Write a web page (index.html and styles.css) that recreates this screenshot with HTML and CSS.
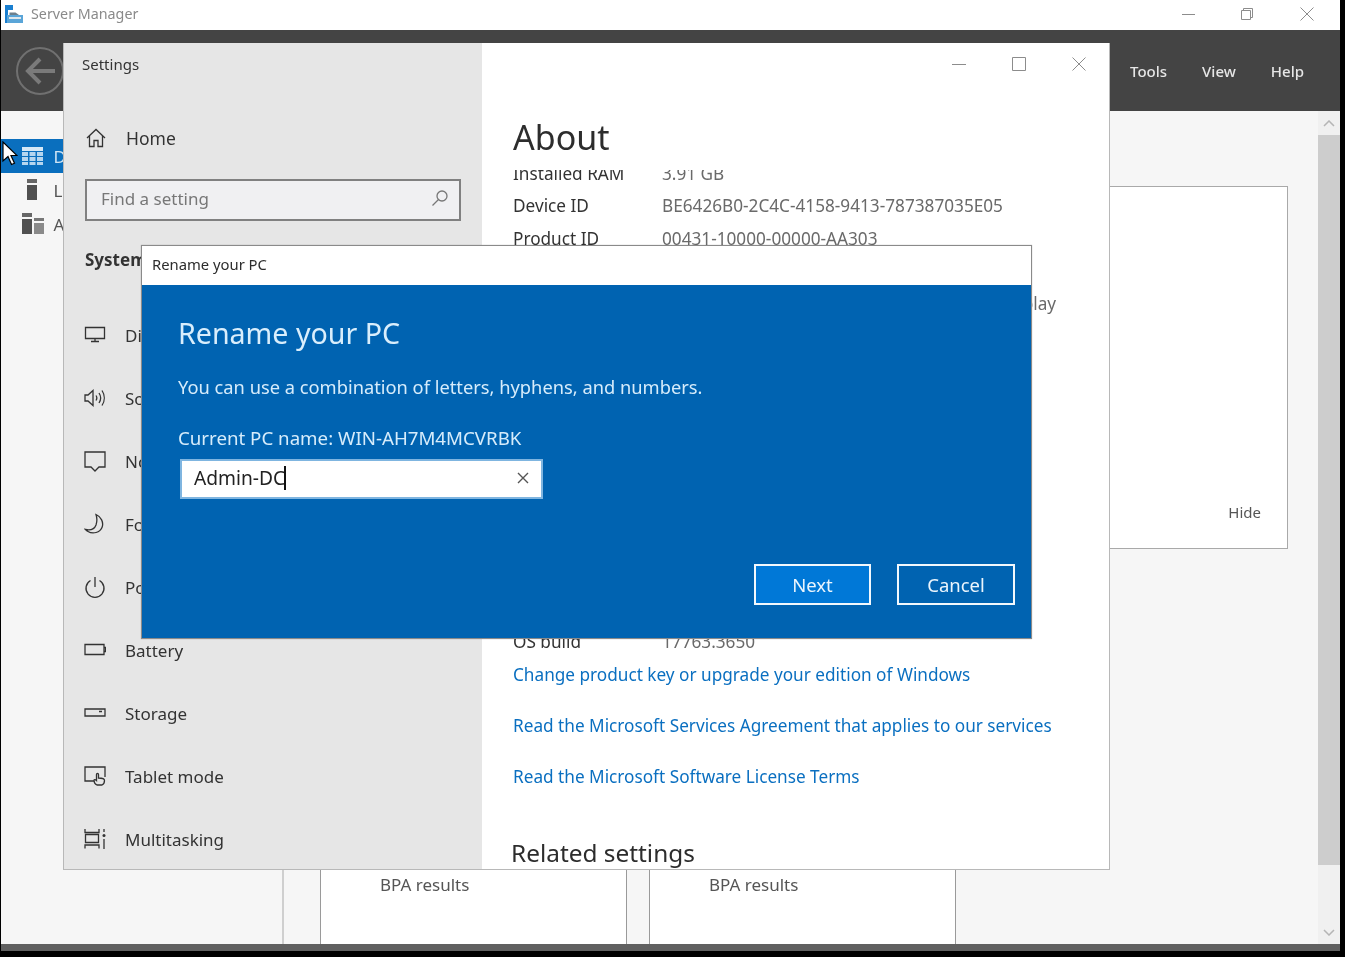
FILE: index.html
```html
<!DOCTYPE html>
<html lang="en">
<head>
<meta charset="utf-8">
<title>Server Manager</title>
<link rel="stylesheet" href="styles.css">
</head>
<body>
<div class="stage">
  <div class="sm">
    <header class="sm-title">
      <svg class="sm-logo" width="20" height="20" viewBox="0 0 20 20"><rect x="1" y="1" width="8" height="5" fill="#1a7fd0"/><rect x="1" y="6" width="3" height="13" fill="#1a7fd0"/><path d="M5.500 11V8.500h6L15 11z" fill="#6d7f8c"/><rect x="3" y="11" width="16" height="8" fill="#5aa5d8"/><rect x="5" y="13" width="12" height="2" fill="#dfe7ec"/></svg>
      <span class="sm-name">Server Manager</span>
      <div class="sm-controls">
        <svg width="14" height="14" viewBox="0 0 14 14"><path d="M0 7.500h13" class="ctl"/></svg>
        <svg width="14" height="14" viewBox="0 0 14 14"><path d="M.5 3.500h9v9h-9zM2.500 3.500v-2h9v9h-2" class="ctl"/></svg>
        <svg width="14" height="14" viewBox="0 0 14 14"><path d="M.5.500l13 13M13.500.500l-13 13" class="ctl"/></svg>
      </div>
    </header>
    <div class="sm-bar">
      <div class="back"><svg width="34" height="30" viewBox="0 0 34 30"><path d="M17 3L5 15l12 12M6 15h26" class="back-arrow"/></svg></div>
      <nav class="sm-menu"><span>Tools</span><span>View</span><span>Help</span></nav>
    </div>
    <div class="sm-body">
      <aside class="sm-side">
        <div class="sm-side-item selected">
          <svg width="23" height="20" viewBox="0 0 23 20"><path d="M1 1h21v4H1z" fill="#d5e8f6"/><path d="M1 6h6v4H1zM8.500 6h6v4h-6zM16 6h6v4h-6zM1 11h6v4H1zM8.500 11h6v4h-6zM16 11h6v4h-6zM1 16h6v3H1zM8.500 16h6v3h-6zM16 16h6v3h-6z" fill="#b5d6ef"/></svg>
          <span>Dashboard</span>
        </div>
        <div class="sm-side-item">
          <svg width="23" height="22" viewBox="0 0 23 22"><rect x="6" y="0" width="10" height="4" fill="#666"/><rect x="6" y="6" width="10" height="15" fill="#505050"/></svg>
          <span>Local Server</span>
        </div>
        <div class="sm-side-item">
          <svg width="23" height="22" viewBox="0 0 23 22"><rect x="1" y="0" width="10" height="4" fill="#666"/><rect x="1" y="6" width="10" height="15" fill="#505050"/><rect x="13" y="5" width="10" height="3" fill="#777"/><rect x="13" y="10" width="10" height="11" fill="#8a8a8a"/></svg>
          <span>All Servers</span>
        </div>
      </aside>
      <main class="sm-main">
        <section class="welcome"><span class="hide">Hide</span></section>
        <div class="cards">
          <div class="card"><span>BPA results</span></div>
          <div class="card"><span>BPA results</span></div>
        </div>
      </main>
      <div class="sm-scroll">
        <div class="scroll-btn"><svg width="12" height="7" viewBox="0 0 12 7"><path d="M1 6l5-5 5 5" class="chev"/></svg></div>
        <div class="scroll-thumb"></div>
        <div class="scroll-track"></div>
        <div class="scroll-btn"><svg width="12" height="7" viewBox="0 0 12 7"><path d="M1 1l5 5 5-5" class="chev"/></svg></div>
      </div>
    </div>
    <div class="sm-foot"></div>
  </div>

  <svg class="cursor" width="16" height="26" viewBox="0 0 16 26"><path d="M1 1v19l5-4.500 3.500 8 3-1.300-3.500-7.700h6z" fill="#fff" stroke="#000" stroke-width="1.200"/></svg>

  <div class="settings">
    <aside class="set-side">
      <div class="set-title">Settings</div>
      <div class="set-home">
        <svg class="ico" width="22" height="22" viewBox="0 0 22 22"><path d="M2 11L11 2.500 20 11M4.500 9v10.500h4.500v-6h4v6h4.500V9" class="line"/></svg>
        <span>Home</span>
      </div>
      <div class="set-search">
        <span>Find a setting</span>
        <svg width="18" height="18" viewBox="0 0 18 18"><circle cx="11" cy="7" r="5" class="line-soft"/><path d="M7.500 10.500L1.500 16.500" class="line-soft"/></svg>
      </div>
      <div class="set-group">System</div>
      <ul class="set-list">
        <li><svg class="ico" width="22" height="22" viewBox="0 0 22 22"><path d="M1.500 3.500h19v11h-19zM11 14.500v3M7 17.500h8" class="line"/></svg><span>Display</span></li>
        <li><svg class="ico" width="22" height="22" viewBox="0 0 22 22"><path d="M1 8h3l5-4.500v15L4 14H1zM12 8.500c1 1.500 1 3.500 0 5M15 6c2 3 2 7 0 10M18 3.500c3 4.500 3 10.500 0 15" class="line"/></svg><span>Sound</span></li>
        <li><svg class="ico" width="22" height="22" viewBox="0 0 22 22"><path d="M1 2h20v15h-6l-4 4-4-4H1z" class="line"/></svg><span>Notifications &amp; actions</span></li>
        <li><svg class="ico" width="22" height="22" viewBox="0 0 22 22"><path d="M12 1.500c5 2 8 8 6 13-2 5-9 7-14 4-1-.6-1.800-1.300-2.500-2 5 1 9-.5 10.500-4.500 1.200-3.500 1-7.500 0-10.500z" class="line"/></svg><span>Focus assist</span></li>
        <li><svg class="ico" width="22" height="22" viewBox="0 0 22 22"><path d="M6.500 4.500a9 9 0 1 0 9 0M11 1v10" class="line"/></svg><span>Power &amp; sleep</span></li>
        <li><svg class="ico" width="22" height="22" viewBox="0 0 22 22"><path d="M1 5.500h19v10H1zM20 8.500h1.500v4H20" class="line"/></svg><span>Battery</span></li>
        <li><svg class="ico" width="22" height="22" viewBox="0 0 22 22"><path d="M1 7h20v7H1zM15 9.500h3" class="line"/></svg><span>Storage</span></li>
        <li><svg class="ico" width="22" height="22" viewBox="0 0 22 22"><path d="M10 16H1V2h20v10M13 20c-2-1-3-3-3-4.500 0-1.500 1.500-1 2.500 0V9.500c0-1.500 2-1.500 2 0V13c2 0 6 0 6 2.500 0 2-1 3.800-2.500 4.500z" class="line"/></svg><span>Tablet mode</span></li>
        <li><svg class="ico" width="22" height="22" viewBox="0 0 22 22"><path d="M1 1v3.500h14V1M1.500 6.500h13v8h-13zM1 20.500V17h14v3.500M20 1v3M20 11v10" class="line"/><circle cx="20" cy="7.500" r="1.500" fill="#333"/></svg><span>Multitasking</span></li>
      </ul>
    </aside>
    <section class="set-main">
      <div class="set-ctl">
        <svg width="14" height="14" viewBox="0 0 14 14"><path d="M0 7.500h14" class="ctl"/></svg>
        <svg width="14" height="14" viewBox="0 0 14 14"><path d="M.5.500h13v13H.5z" class="ctl"/></svg>
        <svg width="14" height="14" viewBox="0 0 14 14"><path d="M.5.500l13 13M13.500.500l-13 13" class="ctl"/></svg>
      </div>
      <h1 class="about">About</h1>
      <div class="pane">
        <div class="pane-inner">
          <div class="row"><b>Installed RAM</b><i>3.91 GB</i></div>
          <div class="row"><b>Device ID</b><i>BE6426B0-2C4C-4158-9413-787387035E05</i></div>
          <div class="row"><b>Product ID</b><i>00431-10000-00000-AA303</i></div>
          <div class="row"><b>System type</b><i>64-bit operating system, x64-based processor</i></div>
          <div class="row"><b>Pen and touch</b><i>No pen or touch input is available for this display</i></div>
          <div class="row gap"><b>OS build</b><i>17763.3650</i></div>
          <a class="link first">Change product key or upgrade your edition of Windows</a>
          <a class="link">Read the Microsoft Services Agreement that applies to our services</a>
          <a class="link">Read the Microsoft Software License Terms</a>
          <h2 class="related">Related settings</h2>
        </div>
      </div>
    </section>
  </div>

  <div class="dialog">
    <div class="dlg-title">Rename your PC</div>
    <div class="dlg-body">
      <h2 class="dlg-head">Rename your PC</h2>
      <p class="dlg-text">You can use a combination of letters, hyphens, and numbers.</p>
      <p class="dlg-cur">Current PC name: WIN-AH7M4MCVRBK</p>
      <div class="dlg-input">
        <span class="val">Admin-DC</span><span class="caret"></span>
        <svg width="12" height="12" viewBox="0 0 12 12"><path d="M1 1l10 10M11 1L1 11" class="clear"/></svg>
      </div>
      <div class="dlg-btns">
        <div class="btn primary">Next</div>
        <div class="btn">Cancel</div>
      </div>
    </div>
  </div>
</div>
</body>
</html>
```
FILE: styles.css
```css
* { box-sizing: border-box; }
html, body { margin: 0; padding: 0; background: #000; }
body { font-family: "Noto Sans", "Open Sans", sans-serif; color: #333; overflow: hidden; }
.stage { position: relative; width: 1345px; height: 957px; overflow: hidden; background: #000; filter: blur(0.35px); }

.sm { display: flex; flex-direction: column; width: 1339px; height: 951px; margin-left: 1px; background: #f6f6f6; }
.sm-title { display: flex; align-items: center; height: 30px; background: #fff; flex: none; padding: 0 26px 3px 3px; }
.sm-logo { flex: none; }
.sm-name { margin-left: 7px; font-size: 14.300px; color: #8a8a8a; }
.sm-controls { margin-left: auto; display: flex; gap: 45px; }
.ctl { fill: none; stroke: #8c8c8c; stroke-width: 1; }
.sm-bar { display: flex; align-items: center; height: 81px; flex: none; background: #444; padding-left: 15px; }
.back { width: 48px; height: 48px; border-radius: 50%; border: 2px solid #707070; display: flex; align-items: center; justify-content: center; }
.back-arrow { fill: none; stroke: #7a7a7a; stroke-width: 4; }
.sm-menu { margin-left: auto; display: flex; gap: 35px; padding-right: 36px; font-size: 15px; font-weight: 500; color: #e6e6e6; }

.sm-body { display: flex; flex: 1; min-height: 0; }
.sm-side { width: 283px; flex: none; padding-top: 28px; border-right: 2px solid #cfcfcf; background: #f6f6f6; }
.sm-side-item { display: flex; align-items: center; height: 34px; padding-left: 20px; gap: 9.500px; font-size: 17px; color: #555; }
.sm-side-item.selected { background: #0a6fbe; color: #cfe5f5; }
.sm-main { flex: 1; min-width: 0; padding: 75px 0 0 36px; overflow: hidden; }
.welcome { display: flex; align-items: flex-end; justify-content: flex-end; width: 968px; height: 363px; background: #fff; border: 1px solid #a9a9a9; padding: 0 26px 26px 0; }
.hide { font-size: 15px; color: #555; }
.cards { display: flex; gap: 22px; margin-top: 27px; height: 400px; }
.card { width: 307px; height: 400px; background: #fff; border: solid #9a9a9a; border-width: 0 1px; padding: 297px 0 0 59px; font-size: 17px; color: #555; }
.sm-scroll { width: 22px; flex: none; display: flex; flex-direction: column; background: #f0f0f0; }
.scroll-btn { height: 24px; display: flex; align-items: center; justify-content: center; flex: none; }
.scroll-thumb { height: 730px; background: #cdcdcd; flex: none; }
.scroll-track { flex: 1; }
.chev { fill: none; stroke: #b5b5b5; stroke-width: 1.500; }
.sm-foot { height: 7px; flex: none; background: #606060; }

.cursor { position: absolute; left: 2px; top: 141px; }

.settings { position: absolute; left: 63px; top: 43px; width: 1047px; height: 827px; display: flex; background: #fff; border: solid #b8b8b8; border-width: 0 1px 1px 1px; }
.set-side { width: 418px; flex: none; background: #e6e6e6; overflow: hidden; padding: 0 0 0 20px; }
.set-title { height: 44px; padding-top: 11px; font-size: 15px; color: #333; margin-left: -2px; }
.set-home { display: flex; align-items: center; height: 40px; margin-top: 31px; padding-left: 1px; gap: 19px; font-size: 17.500px; }
.ico { flex: none; }
.line { fill: none; stroke: #333; stroke-width: 1.300; }
.line-soft { fill: none; stroke: #777; stroke-width: 1.300; }
.set-search { display: flex; align-items: center; justify-content: space-between; width: 376px; height: 42px; margin: 21px 0 0 1px; padding: 0 10px 4px 14px; background: #f0f0f2; border: 2px solid #808080; font-size: 17px; color: #777; }
.set-group { margin: 27px 0 0 1px; height: 30px; font-size: 17px; font-weight: 700; color: #333; }
.set-list { list-style: none; margin: 42px 0 0; padding: 0; display: flex; flex-direction: column; gap: 33px; }
.set-list li { display: flex; align-items: center; height: 30px; gap: 19px; font-size: 17px; color: #333; }

.set-main { flex: 1; min-width: 0; position: relative; display: flex; flex-direction: column; padding-left: 31px; }
.set-ctl { position: absolute; top: 14px; right: 23px; display: flex; gap: 46px; }
.about { margin: 0; height: 126.500px; padding-top: 70px; font-size: 34px; line-height: 48px; font-weight: 400; color: #2d2d2d; flex: none; }
.pane { flex: 1; min-height: 0; overflow: hidden; }
.pane-inner { margin-top: -12.500px; }
.row { display: flex; height: 32.500px; align-items: center; font-size: 17.200px; }
.row b { width: 149px; font-weight: 400; color: #333; flex: none; }
.row i { font-style: normal; color: #6a6a6a; white-space: nowrap; }
.row.gap { margin-top: 305.500px; }
.link { display: block; font-size: 17.200px; height: 51px; line-height: 24px; color: #0a6fc0; }
.link.first { margin-top: 5px; }
.related { margin: 20px 0 0 -2px; font-size: 24.400px; line-height: 34px; font-weight: 400; color: #2d2d2d; }

.dialog { position: absolute; left: 141px; top: 245px; width: 891px; height: 394px; display: flex; flex-direction: column; border: 1px solid #8a8a8a; box-shadow: 0 0 1px rgba(0,0,0,.3); }
.dlg-title { height: 39px; flex: none; background: #fff; padding: 8px 0 0 10px; font-size: 14.800px; color: #2d2d2d; }
.dlg-body { flex: 1; background: #0063b1; padding: 0 16px 0 36px; color: #d6ecfb; }
.dlg-head { margin: 26px 0 0; font-size: 28.600px; line-height: 44px; font-weight: 400; color: #d9eefc; }
.dlg-text { margin: 19px 0 0; font-size: 18.300px; line-height: 26px; }
.dlg-cur { margin: 25px 0 0; font-size: 18.700px; line-height: 26px; }
.dlg-input { display: flex; align-items: center; width: 363px; height: 40px; margin: 8px 0 0 2px; padding: 0 12px 2px 12px; background: #fff; border: 2px solid #7fb5e0; color: #222; font-size: 19.200px; }
.val { line-height: 30px; }
.caret { width: 2px; height: 24px; background: #111; margin-left: -1px; }
.dlg-input svg { margin-left: auto; }
.clear { fill: none; stroke: #555; stroke-width: 1.400; }
.dlg-btns { display: flex; justify-content: flex-end; gap: 26px; margin-top: 65px; }
.btn { display: flex; align-items: center; justify-content: center; width: 118px; height: 41px; border: 2px solid #f2f8fd; color: #eaf5fd; font-size: 18.500px; }
.btn.primary { background: #0078d7; width: 117px; }
```
